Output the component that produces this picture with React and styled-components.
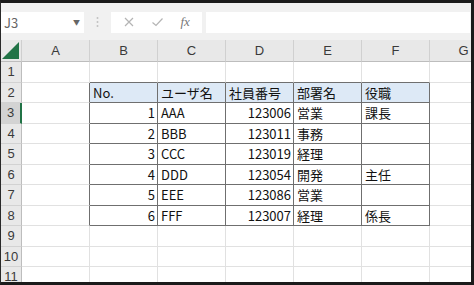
import React from "react";
import styled, { createGlobalStyle } from "styled-components";

const GlobalStyle = createGlobalStyle`
  html, body {
    margin: 0;
    padding: 0;
    background: #1b1b1b;
  }
  * {
    box-sizing: border-box;
  }
`;

const Frame = styled.div`
  width: 474px;
  height: 285px;
  overflow: hidden;
  border-top: 3px solid #1b1b1b;
  border-right: 3px solid #1b1b1b;
  border-bottom: 3px solid #1b1b1b;
  border-left: 1px solid #2a2a2a;
  background: #ffffff;
  font-family: "Noto Sans CJK JP", "Noto Sans", sans-serif;
  display: flex;
  flex-direction: column;
`;

const Toolbar = styled.div`
  height: 37px;
  flex: none;
  background: #f1f1f1;
  display: flex;
  align-items: center;
  padding-top: 1px;
`;

const NameBox = styled.div`
  width: 83px;
  height: 21px;
  background: #fff;
  display: flex;
  align-items: center;
  justify-content: space-between;
  padding: 0 4px 0 3px;
  font-size: 13px;
  color: #666;
`;

const Caret = styled.span`
  font-size: 7px;
  color: #666;
`;

const Grip = styled.div`
  width: 27px;
  display: flex;
  justify-content: center;
`;

const FuncBox = styled.div`
  width: 91px;
  height: 21px;
  background: #fff;
  display: flex;
  align-items: center;
  justify-content: space-around;
  padding: 0 4px;
`;

const Fx = styled.span`
  font-family: "Liberation Serif", serif;
  font-style: italic;
  font-size: 13px;
  color: #777;
`;

const FormulaInput = styled.div`
  flex: 1;
  height: 21px;
  margin: 0 1px 0 4px;
  background: #fff;
`;

const Grid = styled.div`
  flex: 1;
  display: grid;
  grid-template-columns: 21px repeat(7, 68px);
  grid-template-rows: 22px repeat(11, 20.5px);
  overflow: hidden;
`;

const Corner = styled.div`
  background: #e8e8e8;
  border-right: 1px solid #cfcfcf;
  border-bottom: 1px solid #bdbdbd;
  display: flex;
  align-items: flex-end;
  justify-content: flex-end;
  padding: 0 2px 2px 0;
`;

const ColHead = styled.div`
  background: #e8e8e8;
  border-right: 1px solid #d0d0d0;
  border-bottom: 1px solid #bdbdbd;
  display: flex;
  align-items: center;
  justify-content: center;
  font-family: "Liberation Sans", sans-serif;
  font-size: 13px;
  color: #3a3a3a;
`;

const RowHead = styled.div`
  background: ${(p) => (p.$selected ? "#d3d3d3" : "#e8e8e8")};
  border-bottom: 1px solid #d2d2d2;
  border-right: ${(p) => (p.$selected ? "2px solid #217346" : "1px solid #bdbdbd")};
  display: flex;
  align-items: center;
  justify-content: center;
  font-family: "Liberation Sans", sans-serif;
  font-size: 13px;
  color: #3a3a3a;
`;

const Cell = styled.div`
  background: ${(p) => (p.$head ? "#dde9f6" : "#fff")};
  border-right: 1px solid ${(p) => (p.$rightDark ? "#6f6f6f" : "#e1e1e1")};
  border-bottom: 1px solid ${(p) => (p.$bottomDark ? "#6f6f6f" : "#e1e1e1")};
  display: flex;
  align-items: center;
  justify-content: ${(p) => (p.$right ? "flex-end" : "flex-start")};
  padding: 0 2px 0 3px;
  font-size: 13px;
  color: #111;
  white-space: nowrap;
`;

const columns = ["A", "B", "C", "D", "E", "F", "G"];

const header = ["No.", "ユーザ名", "社員番号", "部署名", "役職"];

const records = [
  { no: 1, name: "AAA", id: 123006, dept: "営業", role: "課長" },
  { no: 2, name: "BBB", id: 123011, dept: "事務", role: "" },
  { no: 3, name: "CCC", id: 123019, dept: "経理", role: "" },
  { no: 4, name: "DDD", id: 123054, dept: "開発", role: "主任" },
  { no: 5, name: "EEE", id: 123086, dept: "営業", role: "" },
  { no: 6, name: "FFF", id: 123007, dept: "経理", role: "係長" },
];

const cellValue = (r, c) => {
  if (r === 2 && c >= 1 && c <= 5) return { text: header[c - 1] };
  const rec = records[r - 3];
  if (!rec || c < 1 || c > 5) return { text: "" };
  if (c === 1) return { text: rec.no, right: true };
  if (c === 2) return { text: rec.name };
  if (c === 3) return { text: rec.id, right: true };
  if (c === 4) return { text: rec.dept };
  return { text: rec.role };
};

const CrossIcon = () => (
  <svg width="12" height="12" viewBox="0 0 12 12">
    <path d="M2 2 L10 10 M10 2 L2 10" stroke="#b4b4b4" strokeWidth="1.2" fill="none" />
  </svg>
);

const CheckIcon = () => (
  <svg width="13" height="12" viewBox="0 0 13 12">
    <path d="M1.5 6.5 L5 9.5 L11.5 2.5" stroke="#b4b4b4" strokeWidth="1.2" fill="none" />
  </svg>
);

const GripIcon = () => (
  <svg width="3" height="12" viewBox="0 0 3 12">
    <circle cx="1.5" cy="2" r="1" fill="#c2c2c2" />
    <circle cx="1.5" cy="6" r="1" fill="#c2c2c2" />
    <circle cx="1.5" cy="10" r="1" fill="#c2c2c2" />
  </svg>
);

const CornerMark = () => (
  <svg width="17" height="17" viewBox="0 0 17 17">
    <polygon points="17,0 17,17 0,17" fill="#217346" />
  </svg>
);

const rows = Array.from({ length: 11 }, (_, i) => i + 1);

const App = () => (
  <Frame>
    <GlobalStyle />
    <Toolbar>
      <NameBox>
        J3
        <Caret>▼</Caret>
      </NameBox>
      <Grip>
        <GripIcon />
      </Grip>
      <FuncBox>
        <CrossIcon />
        <CheckIcon />
        <Fx>fx</Fx>
      </FuncBox>
      <FormulaInput />
    </Toolbar>
    <Grid>
      <Corner>
        <CornerMark />
      </Corner>
      {columns.map((col) => (
        <ColHead key={col}>{col}</ColHead>
      ))}
      {rows.map((r) => (
        <React.Fragment key={r}>
          <RowHead $selected={r === 3}>{r}</RowHead>
          {columns.map((col, c) => {
            const inTable = r >= 2 && r <= 8 && c >= 1 && c <= 5;
            const v = cellValue(r, c);
            return (
              <Cell
                key={col}
                $head={r === 2 && inTable}
                $right={v.right}
                $rightDark={inTable || (c === 0 && r >= 2 && r <= 8)}
                $bottomDark={inTable || (r === 1 && c >= 1 && c <= 5)}
              >
                {v.text}
              </Cell>
            );
          })}
        </React.Fragment>
      ))}
    </Grid>
  </Frame>
);

export default App;
